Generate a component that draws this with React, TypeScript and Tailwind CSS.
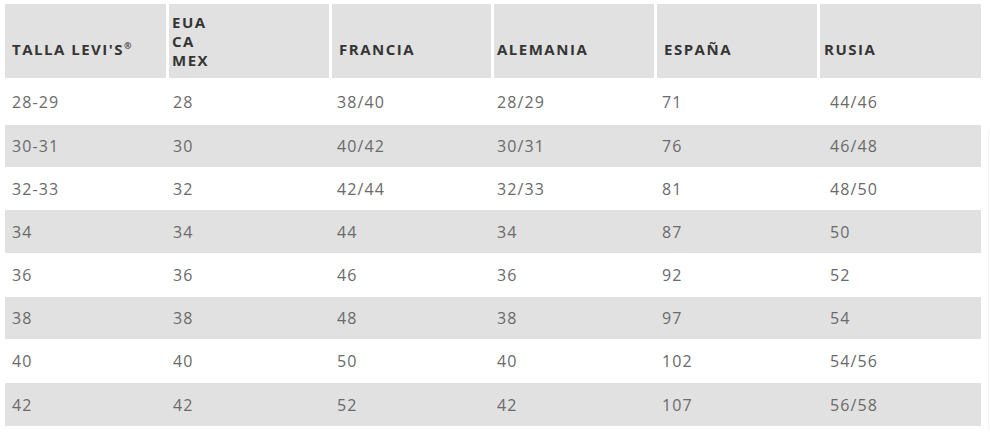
const headers: { lines: string[] }[] = [
  { lines: ["TALLA LEVI'S"] },
  { lines: ["EUA", "CA", "MEX"] },
  { lines: ["FRANCIA"] },
  { lines: ["ALEMANIA"] },
  { lines: ["ESPAÑA"] },
  { lines: ["RUSIA"] },
];

const rows: { cells: string[]; h: string }[] = [
  { cells: ["28-29", "28", "38/40", "28/29", "71", "44/46"], h: "h-[47px]" },
  { cells: ["30-31", "30", "40/42", "30/31", "76", "46/48"], h: "h-[42px]" },
  { cells: ["32-33", "32", "42/44", "32/33", "81", "48/50"], h: "h-[43px]" },
  { cells: ["34", "34", "44", "34", "87", "50"], h: "h-[43px]" },
  { cells: ["36", "36", "46", "36", "92", "52"], h: "h-[44px]" },
  { cells: ["38", "38", "48", "38", "97", "54"], h: "h-[42px]" },
  { cells: ["40", "40", "50", "40", "102", "54/56"], h: "h-[44px]" },
  { cells: ["42", "42", "52", "42", "107", "56/58"], h: "h-[43px]" },
];

const cols = "grid grid-cols-[161px_160px_159px_160px_160px_161px] gap-x-[3px]";
const headPad = ["pl-[7px]", "pl-[3px]", "pl-[7px]", "pl-[3px]", "pl-[7px]", "pl-[4px]"];
const bodyPad = ["pl-[7px]", "pl-[4px]", "pl-[5px]", "pl-[3px]", "pl-[5px]", "pl-[10px]"];

export default function App() {
  return (
    <div className="w-[990px] h-[433px] bg-white flex font-['Open_Sans',sans-serif]">
      <div className="pl-[5px] pt-[4px] w-[981px]">
        {/* Header */}
        <div className={`${cols} h-[74px]`}>
          {headers.map((h, i) => (
            <div
              key={i}
              className={`bg-[#e1e1e1] flex items-center ${headPad[i]} text-[15px] font-bold tracking-[0.1em] text-[#353535]`}
            >
              {h.lines.length === 1 ? (
                <span className="mt-4">
                  {h.lines[0]}
                  {i === 0 && <sup className="text-[9px] font-bold tracking-normal -top-[0.6em]">®</sup>}
                </span>
              ) : (
                <div className="leading-[19px] pt-[1px]">
                  {h.lines.map((l) => (
                    <div key={l}>{l}</div>
                  ))}
                </div>
              )}
            </div>
          ))}
        </div>

        {/* Rows */}
        {rows.map((r, ri) => (
          <div
            key={ri}
            className={`${cols} ${r.h} items-center ${ri % 2 === 1 ? "bg-[#e1e1e1]" : "bg-white"}`}
          >
            {r.cells.map((c, ci) => (
              <div key={ci} className={`${bodyPad[ci]} text-[16px] tracking-[0.07em] text-[#6a6a6a]`}>
                {c}
              </div>
            ))}
          </div>
        ))}
      </div>
      <div className="ml-[7px] mt-[130px] w-px h-[300px] bg-[#f3f3f3]" />
    </div>
  );
}
